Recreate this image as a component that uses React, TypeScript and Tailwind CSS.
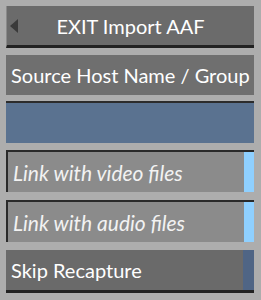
import React from "react";

const font = { fontFamily: '"Lato", "Open Sans", sans-serif' };

function Toggle({ label, on }: { label: string; on: boolean }) {
  return (
    <div className="flex h-[42px] border-t-2 border-l-2 border-[#2a2a2a] bg-[#8b8b8b]">
      <div className="flex-1 flex items-center pl-[5px] text-[21px] italic text-[#f2f2f2] leading-none">
        {label}
      </div>
      <div className={`w-[10px] ${on ? "bg-[#8fd0ff]" : "bg-[#4f6585]"}`} />
    </div>
  );
}

export default function App() {
  return (
    <div className="w-[261px] h-[300px] bg-[#adadad] pt-[6px] pl-[6px] pr-[7px]" style={font}>
      <div className="flex flex-col">
        {/* exit button */}
        <div className="relative flex h-[42px] items-center justify-center border-b-[3px] border-l border-[#222] border-l-[#8a8a8a] bg-[#6b6b6b] text-[20px] text-white leading-none">
          <span className="absolute left-[3px] top-1/2 -translate-y-1/2 w-0 h-0 border-y-[7px] border-y-transparent border-r-[8px] border-r-[#3a3a3a]" />
          EXIT Import AAF
        </div>

        <div className="mt-[7px] flex h-[40px] items-center pl-[5px] bg-[#6f6f6f] text-[20px] text-white leading-none">
          Source Host Name / Group
        </div>

        <div className="mt-[6px] h-[42px] border-t-2 border-[#2c2c2c] bg-[#5a7290]" />

        <div className="mt-[7px]">
          <Toggle label="Link with video files" on />
        </div>
        <div className="mt-[8px]">
          <Toggle label="Link with audio files" on />
        </div>

        <div className="mt-[8px] flex h-[43px] border-b-[3px] border-[#222] bg-[#6a6a6a]">
          <div className="flex-1 flex items-center pl-[5px] text-[20px] text-white leading-none">
            Skip Recapture
          </div>
          <div className="w-[11px] bg-[#4f6585]" />
        </div>
      </div>
    </div>
  );
}
